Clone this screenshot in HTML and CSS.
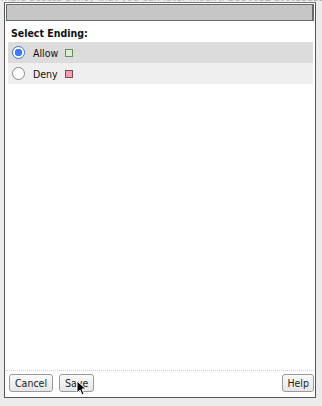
FILE: index.html
```html
<!DOCTYPE html>
<html>
<head>
  <meta charset="UTF-8">
  <title>Select Ending</title>
  <link rel="stylesheet" href="styles.css">
</head>
<body>

<div class="behind">
  <div class="behind-text">mple access policy that you can later modify. See <b>ACL</b> at <b>Access Policies</b> for details.</div>
</div>

<div class="dialog">
  <div class="titlebar"></div>

  <div class="content">
    <div class="section-label">Select Ending:</div>
    <div class="choices">
      <label class="choice choice-on">
        <span class="radio radio-checked"></span>
        <span class="choice-text">Allow</span>
        <span class="swatch swatch-allow"></span>
      </label>
      <label class="choice">
        <span class="radio"></span>
        <span class="choice-text">Deny</span>
        <span class="swatch swatch-deny"></span>
      </label>
    </div>
  </div>

  <!-- Footer buttons -->
  <div class="footer">
    <button class="btn">Cancel</button>
    <button class="btn btn-save">Save
      <svg class="cursor" width="10" height="16" viewBox="0 0 10 16">
        <path d="M1 1 L1 13 L4 10 L6 15 L8 14 L6 9 L10 9 Z" fill="#000" stroke="#fff" stroke-width="1"/>
      </svg>
    </button>
    <div class="spacer"></div>
    <button class="btn btn-help">Help</button>
  </div>
</div>

</body>
</html>
```

FILE: styles.css
```css
html, body {
  margin: 0;
  padding: 0;
  background: #ececec;
}
body {
  font-family: "DejaVu Sans Condensed", "DejaVu Sans", Verdana, sans-serif;
  font-stretch: condensed;
  font-size: 10.5px;
  color: #111;
  width: 322px;
  height: 406px;
  overflow: hidden;
}
.behind {
  height: 2px;
  overflow: hidden;
  position: relative;
}
.behind-text {
  position: absolute;
  left: 1px;
  top: -9px;
  white-space: nowrap;
  color: #b8b8b8;
  font-size: 11px;
}
.dialog {
  margin: 0 6px 0 4px;
  height: 396px;
  box-sizing: border-box;
  border: 1px solid #555;
  border-top-color: #777;
  background: #fff;
  display: flex;
  flex-direction: column;
}
.titlebar {
  height: 15px;
  margin: 1px 1px 0 1px;
  background: #c6c6c6;
  border: 1px solid #6a6a6a;
  border-right-width: 2px;
}
.content {
  flex: 1;
  padding: 0 2px 0 3px;
}
.section-label {
  font-weight: bold;
  margin: 5px 0 0 3px;
  height: 14px;
  line-height: 14px;
}
.choices {
  margin-top: 2px;
}
.choice {
  display: flex;
  align-items: center;
  height: 21px;
  background: #efefef;
}
.choice-on {
  background: #dcdcdc;
}
.radio {
  width: 11px;
  height: 11px;
  border: 1px solid #8a8a8a;
  border-radius: 50%;
  background: #fff;
  margin-left: 4px;
  box-sizing: content-box;
}
.radio-checked {
  border-color: #3a73d8;
  background: radial-gradient(circle, #3c7cf0 0 3.5px, #fff 4px);
}
.choice-text {
  margin-left: 8px;
}
.swatch {
  width: 6px;
  height: 6px;
  margin-left: 7px;
  border: 1px solid #555;
}
.swatch-allow {
  background: #d8f0d0;
  border-color: #6a8a60;
}
.swatch-deny {
  background: #f0a0b0;
  border-color: #7a4a55;
}
.footer {
  display: flex;
  align-items: center;
  gap: 6px;
  border-top: 1px dotted #d0d0d0;
  margin: 0 1px;
  padding: 3px 0 5px 3px;
}
.spacer {
  flex: 1;
}
.btn {
  font-family: "DejaVu Sans Condensed", "DejaVu Sans", Verdana, sans-serif;
  font-stretch: condensed;
  font-size: 10.5px;
  color: #222;
  height: 18px;
  padding: 0 5px;
  background: linear-gradient(#fafafa, #e6e6e6);
  border: 1px solid #9a9a9a;
  border-radius: 3px;
  position: relative;
}
.btn-help {
  padding: 0 4px;
}
.cursor {
  position: absolute;
  left: 16px;
  top: 5px;
}
```
